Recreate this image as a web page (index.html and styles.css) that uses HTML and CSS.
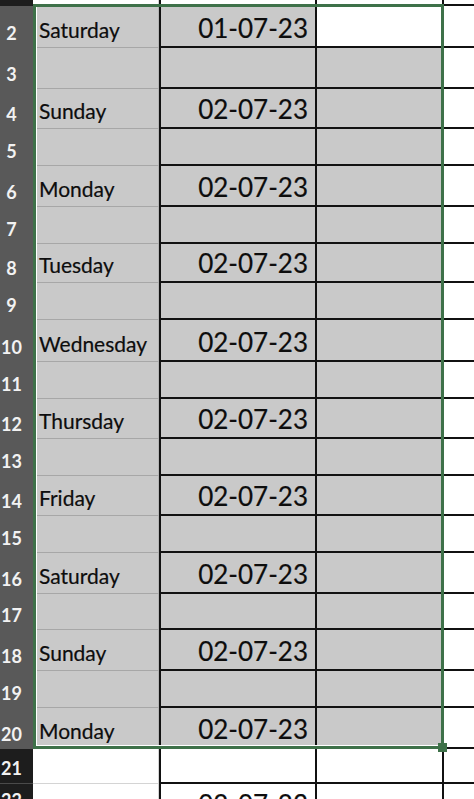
FILE: index.html
```html
<!DOCTYPE html>
<html>
<head>
<meta charset="utf-8">
<link rel="stylesheet" href="styles.css">
</head>
<body>
<div class="sheet">
  <div class="grid">
    <div class="rh rh-dark"></div><div class="ca ca-white"></div><div class="cb cb-white"></div><div class="cc cc-white"></div><div class="cd"></div>

    <div class="rh">2</div><div class="ca">Saturday</div><div class="cb">01-07-23</div><div class="cc cc-white"></div><div class="cd"></div>
    <div class="rh">3</div><div class="ca"></div><div class="cb"></div><div class="cc"></div><div class="cd"></div>
    <div class="rh">4</div><div class="ca">Sunday</div><div class="cb">02-07-23</div><div class="cc"></div><div class="cd"></div>
    <div class="rh">5</div><div class="ca"></div><div class="cb"></div><div class="cc"></div><div class="cd"></div>
    <div class="rh">6</div><div class="ca">Monday</div><div class="cb">02-07-23</div><div class="cc"></div><div class="cd"></div>
    <div class="rh">7</div><div class="ca"></div><div class="cb"></div><div class="cc"></div><div class="cd"></div>
    <div class="rh">8</div><div class="ca">Tuesday</div><div class="cb">02-07-23</div><div class="cc"></div><div class="cd"></div>
    <div class="rh">9</div><div class="ca"></div><div class="cb"></div><div class="cc"></div><div class="cd"></div>
    <div class="rh">10</div><div class="ca">Wednesday</div><div class="cb">02-07-23</div><div class="cc"></div><div class="cd"></div>
    <div class="rh">11</div><div class="ca"></div><div class="cb"></div><div class="cc"></div><div class="cd"></div>
    <div class="rh">12</div><div class="ca">Thursday</div><div class="cb">02-07-23</div><div class="cc"></div><div class="cd"></div>
    <div class="rh">13</div><div class="ca"></div><div class="cb"></div><div class="cc"></div><div class="cd"></div>
    <div class="rh">14</div><div class="ca">Friday</div><div class="cb">02-07-23</div><div class="cc"></div><div class="cd"></div>
    <div class="rh">15</div><div class="ca"></div><div class="cb"></div><div class="cc"></div><div class="cd"></div>
    <div class="rh">16</div><div class="ca">Saturday</div><div class="cb">02-07-23</div><div class="cc"></div><div class="cd"></div>
    <div class="rh">17</div><div class="ca"></div><div class="cb"></div><div class="cc"></div><div class="cd"></div>
    <div class="rh">18</div><div class="ca">Sunday</div><div class="cb">02-07-23</div><div class="cc"></div><div class="cd"></div>
    <div class="rh">19</div><div class="ca"></div><div class="cb"></div><div class="cc"></div><div class="cd"></div>
    <div class="rh">20</div><div class="ca">Monday</div><div class="cb">02-07-23</div><div class="cc"></div><div class="cd"></div>

    <div class="rh rh-dark">21</div><div class="ca ca-white"></div><div class="cb cb-white"></div><div class="cc cc-white"></div><div class="cd"></div>
    <div class="rh rh-dark last">22</div><div class="ca ca-white"></div><div class="cb cb-white last">02-07-23</div><div class="cc cc-white"></div><div class="cd"></div>
  </div>
  <div class="selection"></div>
  <div class="fill-handle"></div>
</div>
</body>
</html>
```

FILE: styles.css
```css
html, body {
  margin: 0;
  padding: 0;
  background: #ffffff;
  overflow: hidden;
}

.sheet {
  position: relative;
  width: 474px;
  height: 799px;
  overflow: hidden;
  font-family: Lato, "Liberation Sans", sans-serif;
  color: #0d0d0d;
}

.grid {
  display: grid;
  grid-template-columns: 33px 126px 156px 127px 32px;
  grid-template-rows: 6px 42px 41px 40px 37px 41px 37px 39px 37px 42px 37px 40px 37px 40px 37px 41px 36px 41px 37px 41px 35px 40px;
}

.grid > div {
  box-sizing: border-box;
  display: flex;
  align-items: flex-end;
  overflow: hidden;
  white-space: nowrap;
}

/* row headers */
.rh {
  background: #595959;
  color: #f2f2f2;
  font-weight: 700;
  font-size: 18px;
  justify-content: center;
  padding-right: 10px;
  padding-bottom: 6px;
  line-height: 1;
}
.rh-dark {
  background: #1d1d1d;
  border-bottom: 1px solid #4a4a4a;
}

/* column A */
.ca {
  background: #c9c9c9;
  border-bottom: 1px solid #a7a7a7;
  border-right: 1px solid #b4b4b4;
  font-size: 21px;
  line-height: 1;
  padding-left: 6px;
  padding-bottom: 7px;
  -webkit-text-stroke: 0.2px #0d0d0d;
}
.ca-white {
  background: #ffffff;
  border-bottom: 1px solid #d4d4d4;
  border-right: 1px solid #d4d4d4;
}

/* column B */
.cb {
  background: #c9c9c9;
  border-left: 2px solid #111111;
  border-bottom: 2px solid #111111;
  font-size: 26px;
  line-height: 1;
  justify-content: flex-end;
  padding-right: 7px;
  padding-bottom: 5px;
  -webkit-text-stroke: 0.2px #0d0d0d;
}
.cb-white {
  background: #ffffff;
}

/* partially visible last row: text starts near its top edge */
.grid > .last {
  align-items: flex-start;
  padding-top: 7px;
  padding-bottom: 0;
}

/* column C */
.cc {
  background: #c9c9c9;
  border-left: 2px solid #111111;
  border-bottom: 2px solid #111111;
}
.cc-white {
  background: #ffffff;
}

/* column D */
.cd {
  background: #ffffff;
  border-left: 2px solid #111111;
  border-bottom: 2px solid #111111;
}

/* selection overlay */
.selection {
  position: absolute;
  left: 33px;
  top: 4px;
  width: 411px;
  height: 745px;
  box-sizing: border-box;
  border: 3px solid #3e7149;
  box-shadow: inset 1px -1px 0 #ffffff;
}

.fill-handle {
  position: absolute;
  left: 438px;
  top: 743px;
  width: 9px;
  height: 9px;
  background: #3e7149;
}
```
